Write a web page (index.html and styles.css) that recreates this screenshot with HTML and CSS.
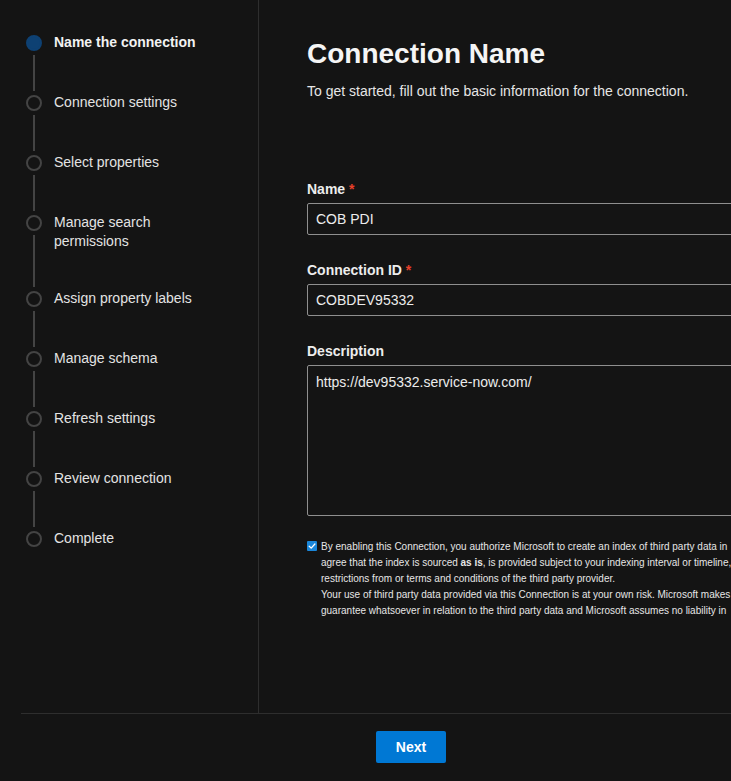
FILE: index.html
```html
<!DOCTYPE html>
<html lang="en">
<head>
<meta charset="utf-8">
<title>Connection Name</title>
<link rel="stylesheet" href="styles.css">
</head>
<body>
<div class="page">
  <div class="top">
    <nav class="steps">
      <div class="step active">
        <div class="ind"><span class="dot"></span><span class="conn"></span></div>
        <div class="label">Name the connection</div>
      </div>
      <div class="step">
        <div class="ind"><span class="dot"></span><span class="conn"></span></div>
        <div class="label">Connection settings</div>
      </div>
      <div class="step">
        <div class="ind"><span class="dot"></span><span class="conn"></span></div>
        <div class="label">Select properties</div>
      </div>
      <div class="step">
        <div class="ind"><span class="dot"></span><span class="conn"></span></div>
        <div class="label">Manage search<br>permissions</div>
      </div>
      <div class="step">
        <div class="ind"><span class="dot"></span><span class="conn"></span></div>
        <div class="label">Assign property labels</div>
      </div>
      <div class="step">
        <div class="ind"><span class="dot"></span><span class="conn"></span></div>
        <div class="label">Manage schema</div>
      </div>
      <div class="step">
        <div class="ind"><span class="dot"></span><span class="conn"></span></div>
        <div class="label">Refresh settings</div>
      </div>
      <div class="step">
        <div class="ind"><span class="dot"></span><span class="conn"></span></div>
        <div class="label">Review connection</div>
      </div>
      <div class="step last">
        <div class="ind"><span class="dot"></span></div>
        <div class="label">Complete</div>
      </div>
    </nav>
    <main class="main">
      <h1 class="title">Connection Name</h1>
      <p class="subtitle">To get started, fill out the basic information for the connection.</p>
      <div class="field first">
        <label class="flabel">Name <span class="req">*</span></label>
        <div class="input">COB PDI</div>
      </div>
      <div class="field">
        <label class="flabel">Connection ID <span class="req">*</span></label>
        <div class="input">COBDEV95332</div>
      </div>
      <div class="field">
        <label class="flabel">Description</label>
        <div class="input textarea">https://dev95332.service-now.com/</div>
      </div>
      <div class="consent">
        <span class="check"><svg viewBox="0 0 10 10" width="10" height="10"><path d="M2.2 5.2 L4.2 7.1 L7.9 3" fill="none" stroke="#fff" stroke-width="1.3" stroke-linecap="round" stroke-linejoin="round"/></svg></span>
        <div class="ctext">
          <div>By enabling this Connection, you authorize Microsoft to create an index of third party data in</div>
          <div>agree that the index is sourced <b>as is</b>, is provided subject to your indexing interval or timeline,</div>
          <div>restrictions from or terms and conditions of the third party provider.</div>
          <div>Your use of third party data provided via this Connection is at your own risk. Microsoft makes</div>
          <div>guarantee whatsoever in relation to the third party data and Microsoft assumes no liability in</div>
        </div>
      </div>
    </main>
  </div>
  <footer class="footer">
    <button class="next">Next</button>
  </footer>
</div>
</body>
</html>
```

FILE: styles.css
```css
html, body {
  margin: 0;
  padding: 0;
  background: #141414;
  overflow: hidden;
}
body {
  font-family: "Liberation Sans", Arial, sans-serif;
  color: #e6e6e6;
  font-size: 14px;
}
.page {
  width: 822px;
  height: 781px;
}
.top {
  display: flex;
  height: 713px;
}
.steps {
  width: 259px;
  flex: none;
  border-right: 1px solid #2e2e2e;
  padding: 33px 0 0 26px;
  box-sizing: border-box;
}
.step {
  display: flex;
  min-height: 60px;
}
.ind {
  width: 16px;
  display: flex;
  flex-direction: column;
  align-items: center;
  padding-top: 2px;
  box-sizing: border-box;
}
.dot {
  width: 16px;
  height: 16px;
  box-sizing: border-box;
  border: 2px solid #444;
  border-radius: 50%;
  flex: none;
}
.step.active .dot {
  background: #0e4173;
  border-color: #0e4173;
}
.conn {
  width: 2px;
  flex: 1;
  background: #444;
  margin: 4px 0 2px;
}
.label {
  margin-left: 12px;
  line-height: 19px;
  padding-bottom: 38px;
  color: #e3e3e3;
}
.step.active .label {
  font-weight: bold;
  color: #f2f2f2;
}
.main {
  flex: 1;
  padding: 36px 0 0 48px;
  min-width: 0;
}
.title {
  margin: 0;
  font-size: 28px;
  line-height: 36px;
  font-weight: bold;
  color: #f5f5f5;
}
.subtitle {
  margin: 9px 0 0;
  line-height: 20px;
  color: #e6e6e6;
}
.field {
  margin-top: 25px;
}
.field.first {
  margin-top: 78px;
}
.flabel {
  display: block;
  font-weight: bold;
  line-height: 20px;
  color: #ededed;
  margin-bottom: 4px;
}
.req {
  color: #e8402a;
}
.input {
  height: 32px;
  box-sizing: border-box;
  border: 1px solid #8f8f8f;
  border-radius: 2px;
  padding: 0 8px;
  line-height: 30px;
  color: #ececec;
  white-space: nowrap;
}
.textarea {
  height: 151px;
  padding-top: 1px;
  line-height: 30px;
}
.consent {
  display: flex;
  margin-top: 23px;
  font-size: 10px;
  line-height: 16px;
  color: #e6e6e6;
}
.check {
  width: 10px;
  height: 10px;
  flex: none;
  margin-top: 2px;
  background: #1a86d9;
  border-radius: 1px;
  display: flex;
}
.ctext {
  margin-left: 4px;
  white-space: nowrap;
}
.footer {
  margin: 0 21px;
  border-top: 1px solid #2e2e2e;
  display: flex;
  justify-content: center;
  padding-top: 17px;
}
.next {
  width: 70px;
  height: 32px;
  border: none;
  border-radius: 2px;
  background: #0078d4;
  color: #fff;
  font-family: "Liberation Sans", Arial, sans-serif;
  font-weight: bold;
  font-size: 14px;
  padding: 0;
}
```
